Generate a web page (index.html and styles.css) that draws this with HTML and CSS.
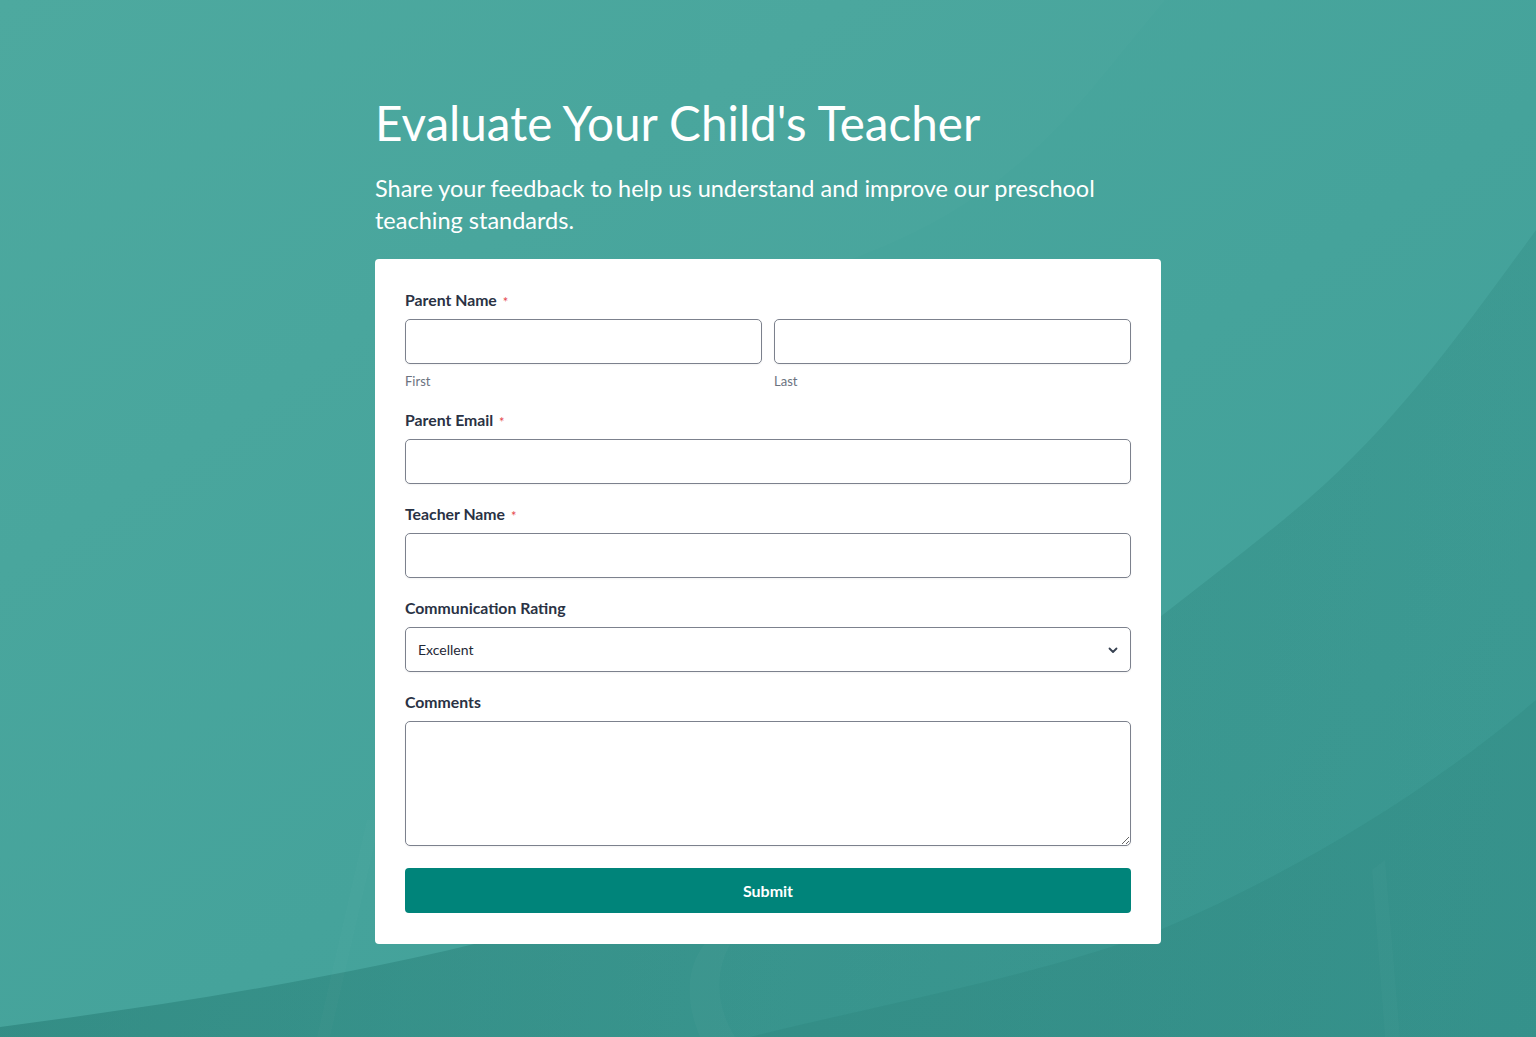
FILE: index.html
```html
<!DOCTYPE html>
<html lang="en">
<head>
<meta charset="utf-8">
<title>Evaluate Your Child's Teacher</title>
<link rel="stylesheet" href="styles.css">
</head>
<body>
<svg class="bg" viewBox="0 0 1536 1037" preserveAspectRatio="none" aria-hidden="true">
  <defs>
    <linearGradient id="g0" x1="0" y1="0" x2="1" y2="1">
      <stop offset="0" stop-color="#4da99f"/>
      <stop offset="0.55" stop-color="#45a39b"/>
      <stop offset="1" stop-color="#3f9f99"/>
    </linearGradient>
    <linearGradient id="g1" x1="0" y1="0" x2="1" y2="0">
      <stop offset="0" stop-color="#0f5f58" stop-opacity="0.32"/>
      <stop offset="0.5" stop-color="#0f5f58" stop-opacity="0.2"/>
      <stop offset="1" stop-color="#0f5f58" stop-opacity="0.12"/>
    </linearGradient>
  </defs>
  <rect width="1536" height="1037" fill="url(#g0)"/>
  <path d="M1165 0 C1140 30 1120 55 1095 85 C1000 200 900 260 700 300 L700 0 Z" fill="#ffffff" opacity="0.015"/>
  <path d="M0 1027 C130 1010 260 990 380 965 C700 900 950 790 1160 617 C1210 578 1260 540 1307 500 C1400 420 1470 320 1536 230 L1536 1037 L0 1037 Z" fill="url(#g1)"/>
  <path d="M750 1037 C900 1000 1040 975 1160 930 C1300 870 1430 790 1536 700 L1536 1037 Z" fill="#0f5f58" opacity="0.1"/>
  <path d="M367 820 L380 820 L330 1037 L317 1037 Z" fill="#ffffff" opacity="0.015"/>
  <path d="M1372 870 L1385 860 L1400 1037 L1385 1037 Z" fill="#ffffff" opacity="0.02"/>
  <path d="M700 1037 C680 990 690 950 720 930 L740 930 C715 960 712 1000 735 1037 Z" fill="#ffffff" opacity="0.025"/>
</svg>
<main class="page">
  <h1 class="title">Evaluate Your Child's Teacher</h1>
  <p class="subtitle">Share your feedback to help us understand and improve our preschool teaching standards.</p>
  <form class="card">
    <div class="field">
      <label class="label">Parent Name <span class="req">*</span></label>
      <div class="row">
        <div class="col">
          <input class="input" type="text">
          <span class="sub">First</span>
        </div>
        <div class="col">
          <input class="input" type="text">
          <span class="sub">Last</span>
        </div>
      </div>
    </div>
    <div class="field">
      <label class="label">Parent Email <span class="req">*</span></label>
      <input class="input" type="email">
    </div>
    <div class="field">
      <label class="label">Teacher Name <span class="req">*</span></label>
      <input class="input" type="text">
    </div>
    <div class="field">
      <label class="label">Communication Rating</label>
      <div class="select-wrap">
        <select class="input select">
          <option>Excellent</option>
          <option>Good</option>
          <option>Fair</option>
          <option>Poor</option>
        </select>
        <svg class="chev" viewBox="0 0 12 12" aria-hidden="true"><path d="M2.5 4.5 L6 8 L9.5 4.5" fill="none" stroke="#374151" stroke-width="1.8" stroke-linecap="round" stroke-linejoin="round"/></svg>
      </div>
    </div>
    <div class="field last">
      <label class="label">Comments</label>
      <textarea class="input textarea"></textarea>
    </div>
    <button class="submit" type="button">Submit</button>
  </form>
</main>
</body>
</html>
```
FILE: styles.css
```css
* { box-sizing: border-box; }
html, body { margin: 0; padding: 0; }
body {
  min-height: 1037px;
  font-family: Lato, "Open Sans", sans-serif;
  background: #45a39b;
  position: relative;
  overflow: hidden;
}
.bg {
  position: absolute;
  left: 0; top: 0;
  width: 1536px; height: 1037px;
  z-index: 0;
}
.page {
  position: relative;
  z-index: 1;
  width: 786px;
  margin: 0 auto;
  padding-top: 92px;
}
.title {
  margin: 0;
  color: #fff;
  font-weight: 400;
  font-size: 47.6px;
  line-height: 62px;
}
.subtitle {
  margin: 18px 0 0;
  color: #fff;
  font-size: 23.5px;
  line-height: 32px;
  max-width: 760px;
}
.card {
  margin-top: 23px;
  background: #fff;
  border-radius: 4px;
  padding: 31px 30px 31px;
  display: flex;
  flex-direction: column;
}
.field {
  display: flex;
  flex-direction: column;
  margin-bottom: 20px;
}
.field.last { margin-bottom: 22px; }
.label {
  display: block;
  font-size: 15.8px;
  font-weight: 700;
  color: #2a3244;
  line-height: 20px;
  height: 20px;
  margin-bottom: 9px;
}
.req {
  color: #e5484d;
  font-size: 13px;
  font-weight: 400;
  line-height: 0;
  margin-left: 2px;
  position: relative;
  top: 1px;
}
.row {
  display: flex;
  gap: 12px;
}
.col {
  flex: 1;
  display: flex;
  flex-direction: column;
}
.input {
  width: 100%;
  height: 45px;
  border: 1px solid #7c818d;
  border-radius: 5px;
  background: #fff;
  font-family: inherit;
  font-size: 14px;
  color: #1f2937;
  padding: 0 12px;
  margin: 0;
  box-shadow: 0 1px 2px rgba(0,0,0,0.05);
}
.sub {
  font-size: 13px;
  color: #6b7280;
  line-height: 18px;
  margin-top: 8px;
}
.select-wrap {
  position: relative;
}
.select {
  appearance: none;
  -webkit-appearance: none;
  display: block;
}
.chev {
  position: absolute;
  right: 12px;
  top: 17px;
  width: 12px;
  height: 12px;
  pointer-events: none;
}
.textarea {
  display: block;
  height: 125px;
  resize: vertical;
  padding: 10px 12px;
}
.submit {
  height: 45px;
  border: none;
  border-radius: 4px;
  background: #00847a;
  color: #fff;
  font-family: inherit;
  font-size: 16px;
  font-weight: 700;
  cursor: pointer;
}
```
